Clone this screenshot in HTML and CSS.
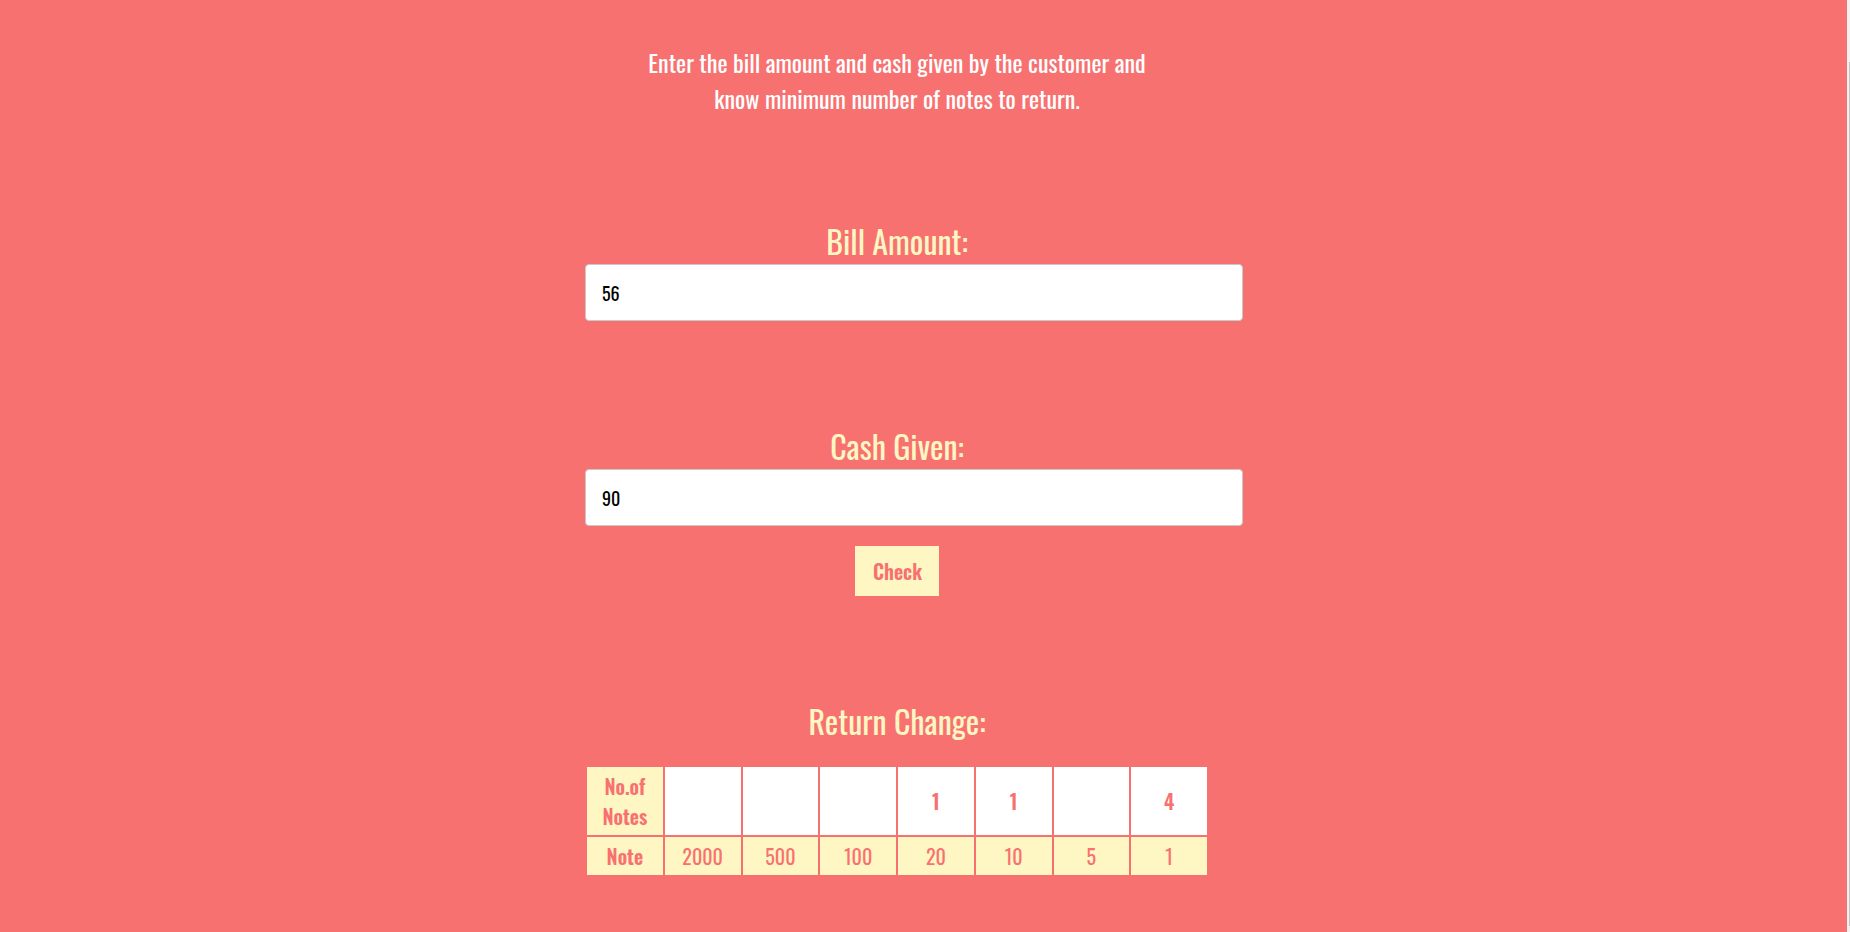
FILE: index.html
```html
<!DOCTYPE html>
<html lang="en">
<head>
<meta charset="utf-8">
<title>Cash Register Manager</title>
<link rel="stylesheet" href="styles.css">
</head>
<body>
<div class="scrollbar"><div class="thumb"></div></div>
<main class="page">
  <section class="app">
    <p class="intro">Enter the bill amount and cash given by the customer and<br>know minimum number of notes to return.</p>

    <div class="field">
      <label class="label" for="bill">Bill Amount:</label>
      <input class="input" id="bill" type="number" value="56">
    </div>

    <div class="field">
      <label class="label" for="cash">Cash Given:</label>
      <input class="input" id="cash" type="number" value="90">
    </div>

    <div class="actions">
      <button class="btn" type="button">Check</button>
    </div>

    <h2 class="title">Return Change:</h2>

    <table class="notes">
      <tr>
        <th class="head">No.of Notes</th>
        <td class="count"></td>
        <td class="count"></td>
        <td class="count"></td>
        <td class="count">1</td>
        <td class="count">1</td>
        <td class="count"></td>
        <td class="count">4</td>
      </tr>
      <tr>
        <th class="head">Note</th>
        <td class="value">2000</td>
        <td class="value">500</td>
        <td class="value">100</td>
        <td class="value">20</td>
        <td class="value">10</td>
        <td class="value">5</td>
        <td class="value">1</td>
      </tr>
    </table>
  </section>
</main>
</body>
</html>
```
FILE: styles.css
```css
html, body {
  margin: 0;
  padding: 0;
}

body {
  background: #f87171;
  font-family: "Oswald", "Roboto Condensed", "Liberation Sans", sans-serif;
  min-height: 932px;
  overflow: hidden;
}

.scrollbar {
  position: fixed;
  top: 0;
  right: 0;
  width: 3px;
  height: 100%;
  background: #f1f1f1;
}

.thumb {
  position: absolute;
  top: 62px;
  right: 0;
  width: 1px;
  height: 864px;
  background: #c4c4c4;
}

.page {
  width: 1794px;
}

.app {
  width: 624px;
  margin: 0 auto;
  padding-top: 44px;
  display: flex;
  flex-direction: column;
}

.intro {
  margin: 0;
  color: #ffffff;
  font-size: 24px;
  text-align: center;
}

.field {
  margin-top: 101px;
  display: flex;
  flex-direction: column;
}

.field + .field {
  margin-top: 101px;
}

.label {
  display: block;
  color: #fef7c3;
  font-size: 32px;
  text-align: center;
}

.input {
  box-sizing: border-box;
  width: 658px;
  height: 57px;
  margin: 0;
  padding: 0 16px;
  border: 1px solid #c9c9c9;
  border-radius: 4px;
  background: #ffffff;
  color: #000000;
  font-family: "Oswald", "Roboto Condensed", sans-serif;
  font-size: 18px;
  outline: none;
  -moz-appearance: textfield;
}

.input::-webkit-outer-spin-button,
.input::-webkit-inner-spin-button {
  -webkit-appearance: none;
  margin: 0;
}

.actions {
  display: flex;
  justify-content: center;
  margin-top: 20px;
}

.btn {
  padding: 10px 17px 10px 18px;
  border: none;
  border-radius: 0;
  background: #fef7c3;
  color: #f87171;
  font-family: "Oswald", "Roboto Condensed", sans-serif;
  font-size: 20px;
  font-weight: 600;
  line-height: normal;
  cursor: pointer;
}

.title {
  margin: 101px 0 0;
  color: #fef7c3;
  font-size: 32px;
  font-weight: 400;
  text-align: center;
}

.notes {
  margin-top: 21px;
  width: 100%;
  table-layout: fixed;
  border-spacing: 2px;
  font-size: 20px;
  color: #f87171;
}

.notes th,
.notes td {
  padding: 4px;
  text-align: center;
  line-height: normal;
}

.head {
  background: #fef7c3;
  font-weight: 600;
}

.count {
  background: #ffffff;
  font-weight: 600;
}

.value {
  background: #fef7c3;
  font-weight: 400;
}
```
